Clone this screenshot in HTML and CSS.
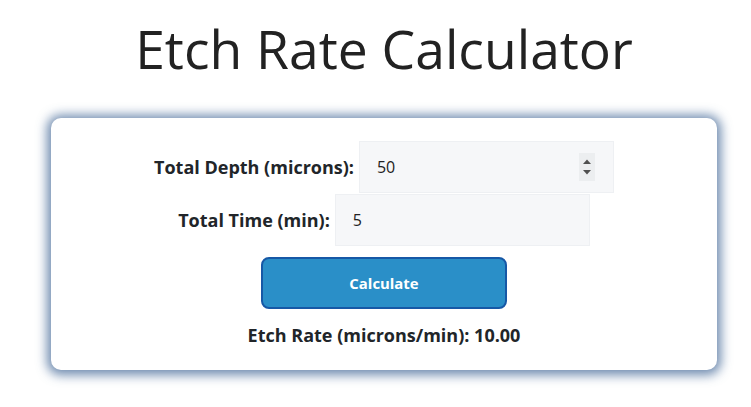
FILE: index.html
```html
<!DOCTYPE html>
<html>
<head>
<meta charset="utf-8">
<link rel="stylesheet" href="styles.css">
</head>
<body>
<div class="page">
  <h1 class="title">Etch Rate Calculator</h1>
  <div class="card">
    <div class="row">
      <label class="label" for="depth">Total Depth (microns):</label>
      <div class="field">
        <span class="value">50</span>
        <span class="spin"><svg width="16" height="28" viewBox="0 0 16 28"><path d="M4 11 L8 6.5 L12 11 Z" fill="#505050"/><path d="M4 17 L8 21.5 L12 17 Z" fill="#505050"/></svg></span>
      </div>
    </div>
    <div class="row">
      <label class="label" for="time">Total Time (min):</label>
      <div class="field">
        <span class="value">5</span>
      </div>
    </div>
    <button class="btn">Calculate</button>
    <div class="result">Etch Rate (microns/min): 10.00</div>
  </div>
</div>
</body>
</html>
```
FILE: styles.css
```css
html, body {
  margin: 0;
  padding: 0;
  background: #ffffff;
}
body {
  font-family: "Open Sans", "Noto Sans", sans-serif;
  color: #212529;
}
.page {
  display: flex;
  flex-direction: column;
  align-items: center;
  padding: 0 26px 20px 43px;
}
.title {
  font-weight: 400;
  font-size: 53.4px;
  line-height: 60px;
  margin: 19px 0 39px 0;
  color: #222;
  white-space: nowrap;
}
.card {
  box-sizing: border-box;
  width: 666px;
  height: 252px;
  background: #fff;
  border-radius: 10px;
  box-shadow: 0 1px 11px 4px rgba(75, 110, 155, 0.8);
  display: flex;
  flex-direction: column;
  align-items: center;
  padding-top: 22px;
}
.row {
  display: flex;
  align-items: center;
  gap: 5px;
  height: 53px;
}
.label {
  font-weight: 700;
  font-size: 18px;
  color: #212529;
  white-space: nowrap;
}
.field {
  box-sizing: border-box;
  width: 255px;
  height: 52px;
  background: #f6f7f9;
  border: 1px solid #eef0f3;
  display: flex;
  align-items: center;
  justify-content: space-between;
  padding: 0 18px 0 17px;
  font-size: 16px;
  color: #222;
}
.spin {
  display: flex;
  background: #eceef0;
  width: 16px;
  height: 28px;
  align-items: center;
  justify-content: center;
}
.btn {
  margin-top: 11px;
  width: 246px;
  height: 52px;
  background: #2a8fc8;
  border: 2px solid #1658a6;
  border-radius: 8px;
  color: #fff;
  font-family: "Open Sans", "Noto Sans", sans-serif;
  font-weight: 700;
  font-size: 14.9px;
}
.result {
  margin-top: 14px;
  font-weight: 700;
  font-size: 18px;
  color: #212529;
  white-space: nowrap;
}
```
